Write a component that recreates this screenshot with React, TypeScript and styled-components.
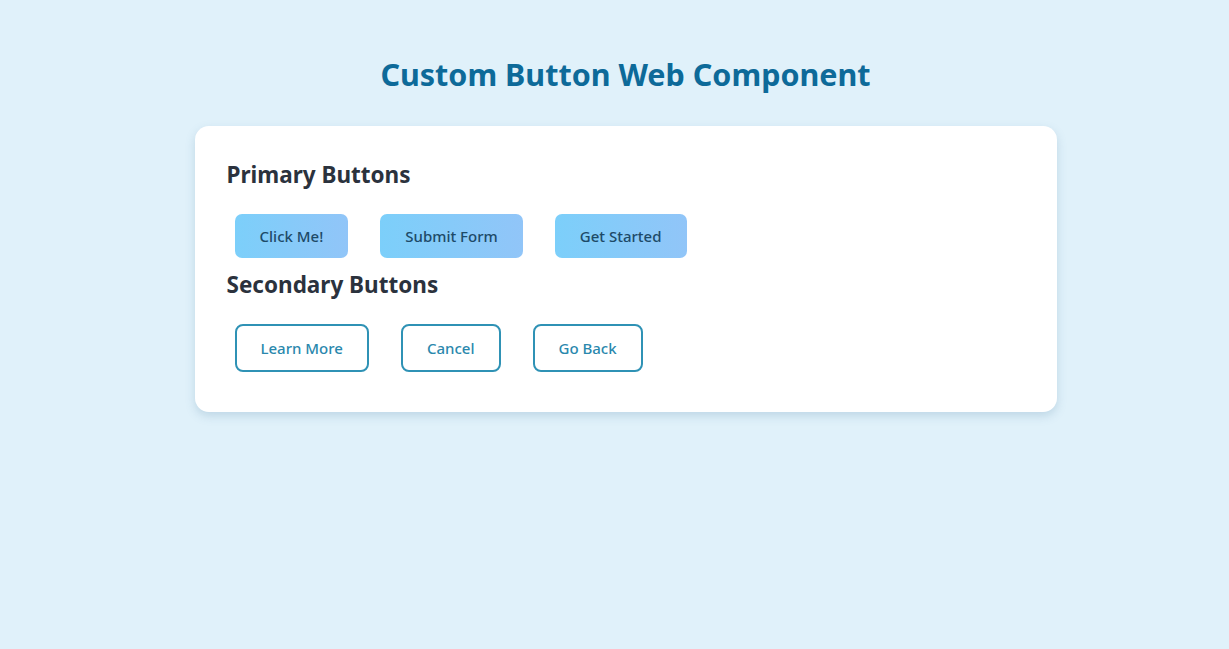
import React from "react";
import styled, { createGlobalStyle } from "styled-components";

const GlobalStyle = createGlobalStyle`
  html, body {
    margin: 0;
    padding: 0;
    background: #e0f1fa;
    font-family: "Noto Sans", "Open Sans", sans-serif;
  }
`;

const Page = styled.main`
  min-height: 649px;
  box-sizing: border-box;
  padding: 52px 0 0 22px;
  display: flex;
  flex-direction: column;
  align-items: center;
`;

const Title = styled.h1`
  margin: 0 0 30px;
  font-size: 30.5px;
  line-height: 44px;
  font-weight: 700;
  color: #0d6a99;
`;

const Card = styled.section`
  width: 862px;
  box-sizing: border-box;
  background: #ffffff;
  border-radius: 14px;
  padding: 32px 32px 40px;
  box-shadow: 0 4px 10px rgba(90, 140, 170, 0.25);
`;

const SectionTitle = styled.h2`
  margin: 0;
  font-size: 22.5px;
  line-height: 34px;
  font-weight: 700;
  color: #2b323d;
`;

const ButtonRow = styled.div<{ $last?: boolean }>`
  display: flex;
  gap: 32px;
  padding-left: 8px;
  margin: ${(p) => (p.$last ? "22px 0 0" : "22px 0 10px")};
`;

const PrimaryButton = styled.button`
  height: 44px;
  padding: 0 25px;
  border: none;
  border-radius: 7px;
  background: linear-gradient(90deg, #7ccffa 0%, #91c5f8 100%);
  color: #1d4a68;
  font-family: inherit;
  font-size: 15px;
  font-weight: 500;
  cursor: pointer;
`;

const SecondaryButton = styled.button`
  height: 48px;
  padding: 0 24px;
  border: 2px solid #2f92b5;
  border-radius: 8px;
  background: #ffffff;
  color: #2a88ad;
  font-family: inherit;
  font-size: 15px;
  font-weight: 500;
  cursor: pointer;
`;

const primary = ["Click Me!", "Submit Form", "Get Started"];
const secondary = ["Learn More", "Cancel", "Go Back"];

export default function App() {
  return (
    <>
      <GlobalStyle />
      <Page>
        <Title>Custom Button Web Component</Title>
        <Card>
          <SectionTitle>Primary Buttons</SectionTitle>
          <ButtonRow>
            {primary.map((label) => (
              <PrimaryButton key={label}>{label}</PrimaryButton>
            ))}
          </ButtonRow>
          <SectionTitle>Secondary Buttons</SectionTitle>
          <ButtonRow $last>
            {secondary.map((label) => (
              <SecondaryButton key={label}>{label}</SecondaryButton>
            ))}
          </ButtonRow>
        </Card>
      </Page>
    </>
  );
}
